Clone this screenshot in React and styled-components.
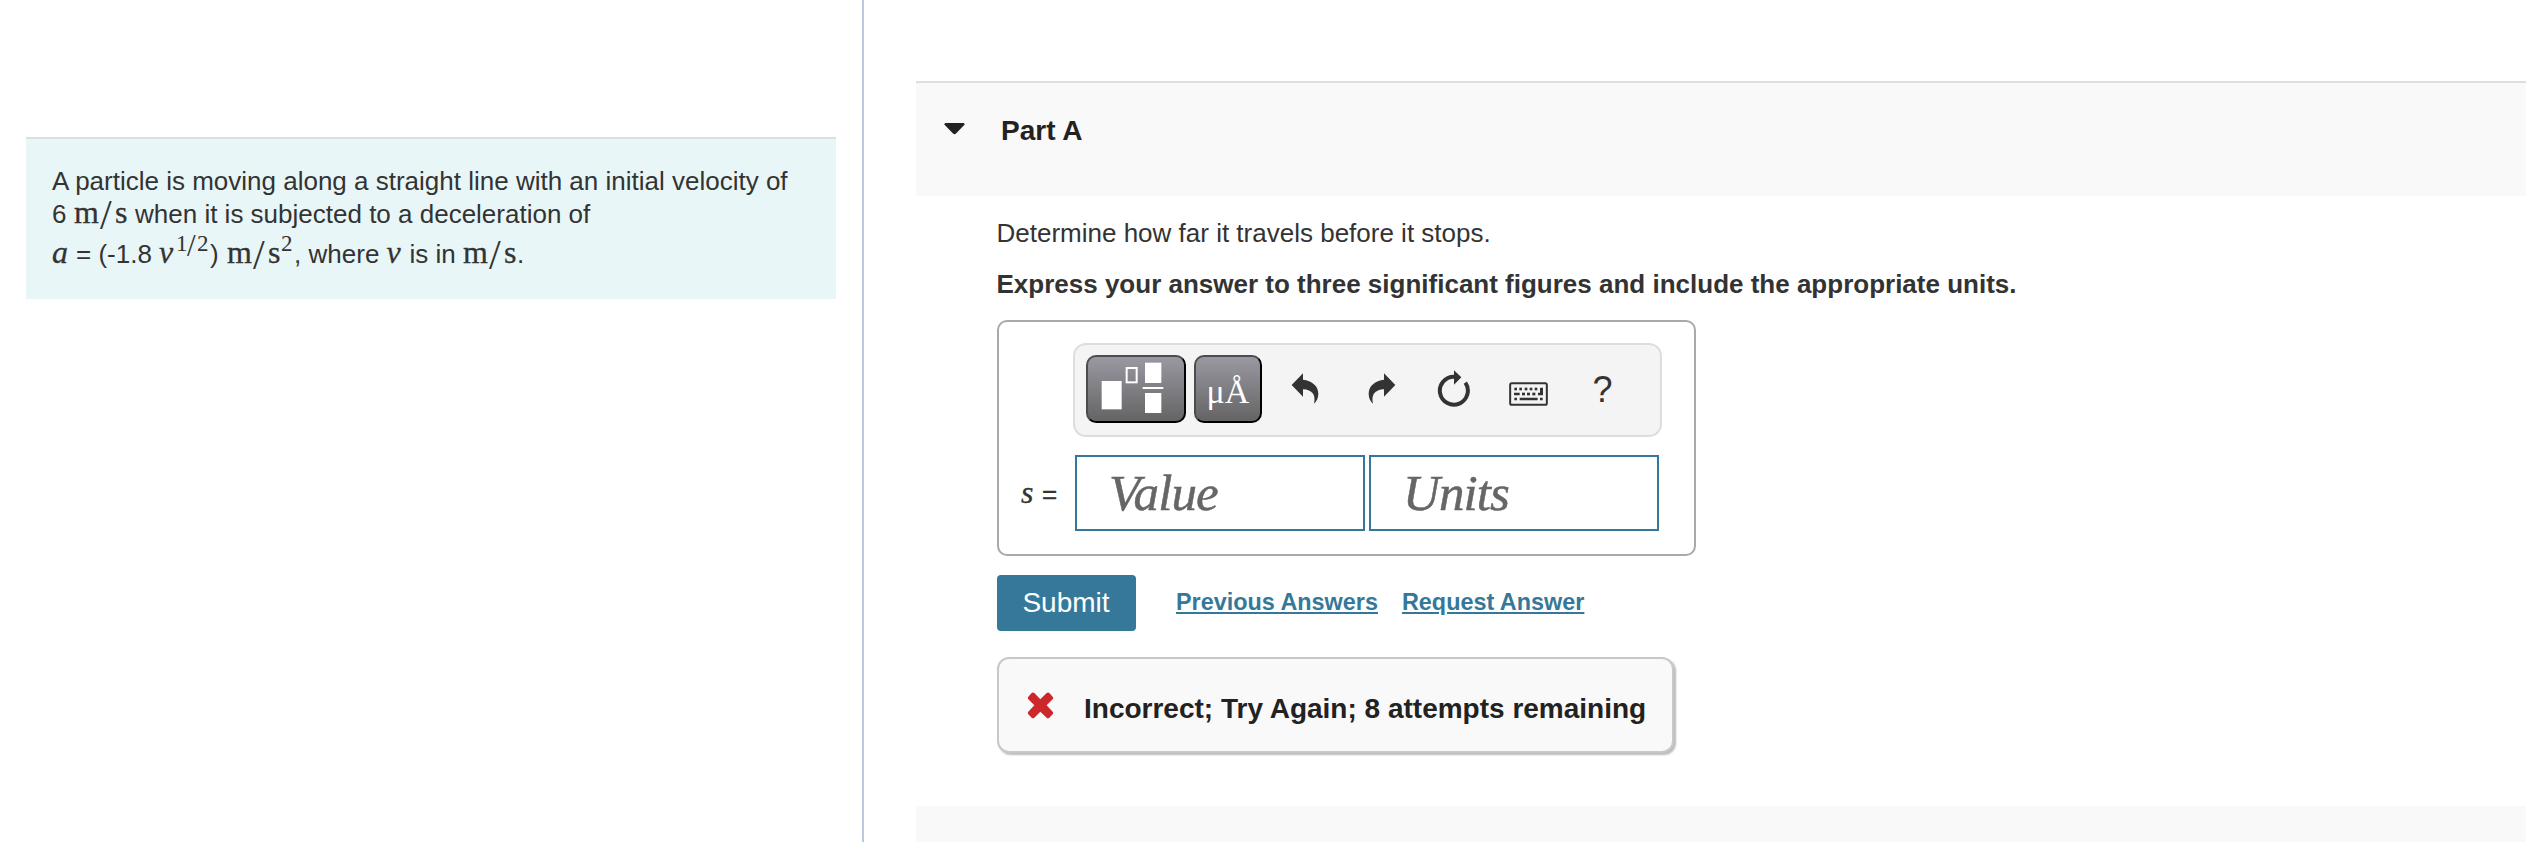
import React from "react";
import styled, { createGlobalStyle } from "styled-components";

const Global = createGlobalStyle`
  * { box-sizing: border-box; }
  body {
    margin: 0;
    background: #fff;
    color: #333;
    font-family: "Liberation Sans", Arial, sans-serif;
    font-size: 26px;
    overflow: hidden;
  }
`;

const Page = styled.div`
  display: flex;
  height: 842px;
  overflow: hidden;
`;

const Sidebar = styled.aside`
  flex: none;
  width: 864px;
  padding: 137px 26px 0;
  border-right: 2px solid #bccadb;
`;

const Problem = styled.section`
  height: 162px;
  padding: 26px 0 0 26px;
  background: #e9f6f7;
  border-top: 2px solid #dedede;
`;

const Line = styled.div`
  display: flex;
  align-items: baseline;
  height: ${(p) => p.$h}px;
  line-height: ${(p) => p.$h}px;
  white-space: pre;
`;

const Piece = styled.span`
  flex: none;
  width: ${(p) => (p.$w ? p.$w + "px" : "auto")};
`;

const MathPiece = styled(Piece)`
  font-family: "Liberation Serif", serif;
  font-size: ${(p) => p.$size || 32}px;
  font-style: ${(p) => (p.$italic ? "italic" : "normal")};
  line-height: 0;
  -webkit-text-stroke: 0.3px currentColor;
`;

const Slash = styled(MathPiece)`
  position: relative;
  top: 6px;
  -webkit-text-stroke: 0;
`;

const Superscript = styled(MathPiece)`
  position: relative;
  top: ${(p) => p.$top || -12}px;
  -webkit-text-stroke: 0;
`;

const Main = styled.main`
  flex: 1;
  display: flex;
  flex-direction: column;
  padding: 81px 0 0 52px;
`;

const PartHeader = styled.header`
  flex: none;
  display: flex;
  height: 115px;
  padding: 30px 0 0 28px;
  background: #f9f9f9;
  border-top: 2px solid #dedede;
`;

const Caret = styled.svg`
  flex: none;
  margin: 10px 36px 0 0;
`;

const PartTitle = styled.h2`
  margin: 0;
  font-size: 28px;
  line-height: 36px;
  color: #222;
`;

const PartBody = styled.div`
  display: flex;
  flex-direction: column;
  align-items: flex-start;
  padding: 21px 0 0 81px;
`;

const Prompt = styled.p`
  margin: 0 0 19px -0.5px;
  height: 32px;
  line-height: 32px;
  font-weight: ${(p) => (p.$bold ? 700 : 400)};
  white-space: nowrap;
`;

const AnswerBox = styled.div`
  width: 699px;
  height: 236px;
  margin-top: 1px;
  padding: 21px 0 0 22px;
  border: 2px solid #a9a9a9;
  border-radius: 10px;
`;

const Toolbar = styled.div`
  display: flex;
  width: 589px;
  height: 94px;
  margin-left: 52px;
  padding: 10px 0 0 11px;
  background: #f4f4f4;
  border: 2px solid #ddd;
  border-radius: 13px;
`;

const PaletteButton = styled.button`
  flex: none;
  display: flex;
  align-items: center;
  justify-content: center;
  width: ${(p) => p.$w}px;
  height: 68px;
  margin: 0 8px 0 0;
  padding: ${(p) => p.$pad};
  border: 2px solid;
  border-color: #4c4c4c #000 #000 #4c4c4c;
  border-radius: 10px;
  background: linear-gradient(#9a98a2, #646464);
  color: #fff;
  font-family: "Liberation Serif", serif;
  font-size: 34px;
`;

const IconButton = styled.button`
  flex: none;
  display: flex;
  align-items: center;
  justify-content: center;
  width: ${(p) => p.$w}px;
  height: 68px;
  padding: ${(p) => p.$drop || 0}px 0 0;
  border: 0;
  background: none;
  color: #333;
  font-family: "Liberation Sans", sans-serif;
  font-size: 36px;
`;

const FieldRow = styled.div`
  display: flex;
  margin-top: 18px;
`;

const FieldLabel = styled.div`
  display: flex;
  align-items: baseline;
  width: 54px;
  height: 76px;
  line-height: 78px;
`;

const Equals = styled(Piece)`
  -webkit-text-stroke: 0.4px currentColor;
`;

const Field = styled.div`
  width: 290px;
  height: 76px;
  margin-right: 4px;
  padding-left: 32px;
  border: 2px solid #367899;
  color: #666;
  font-family: "Liberation Serif", serif;
  font-style: italic;
  font-size: 51px;
  line-height: 72px;
  letter-spacing: -0.9px;
  -webkit-text-stroke: 0.5px currentColor;
`;

const Actions = styled.div`
  display: flex;
  height: 56px;
  margin-top: 19px;
`;

const Submit = styled.button`
  width: 139px;
  height: 56px;
  margin: 0 40px 0 0;
  padding: 0 1px 0 0;
  border: 0;
  border-radius: 4px;
  background: #367899;
  color: #fff;
  font-family: "Liberation Sans", sans-serif;
  font-size: 28px;
  line-height: 56px;
`;

const TextLink = styled.a`
  margin-right: 24px;
  color: #367899;
  font-size: 23.4px;
  font-weight: 700;
  line-height: 55px;
  text-decoration: underline;
  text-decoration-thickness: 2px;
  text-underline-offset: 2px;
  white-space: nowrap;
`;

const Feedback = styled.div`
  display: flex;
  align-items: center;
  width: 677px;
  height: 96px;
  margin-top: 26px;
  padding-left: 28px;
  border: 2px solid #c8c8c8;
  border-radius: 12px;
  background: #f9f9f9;
  box-shadow: 2px 2px 2px #bbb;
  color: #222;
  font-size: 28px;
  font-weight: 700;
  white-space: nowrap;
`;

const FeedbackText = styled.span`
  margin: 7px 0 0 30px;
`;

const NextPart = styled.div`
  flex: none;
  height: 36px;
  margin-top: 53px;
  background: #f9f9f9;
`;

const TemplateIcon = () => (
  <svg width="64" height="52" viewBox="364 156 192 156">
    <g fill="#fff">
      <rect x="366" y="213" width="60" height="85" />
      <rect x="496" y="158" width="49" height="61" />
      <rect x="489" y="231" width="62" height="6" />
      <rect x="496" y="249" width="49" height="60" />
    </g>
    <rect x="441" y="174" width="30" height="43" fill="none" stroke="#fff" strokeWidth="6" />
  </svg>
);

const BentArrow = ({ flip }) => (
  <svg width="28" height="32" viewBox="0 0 84 96">
    <path
      transform={flip ? "translate(84 0) scale(-1 1)" : undefined}
      fill="#333"
      d="M2 36 36 1V20C62 23 82 38 82 62 82 74 77 85 69 92 75 66 64 50 36 49V71Z"
    />
  </svg>
);

const ResetIcon = () => (
  <svg width="34" height="38" viewBox="291 181 102 114">
    <path d="M342 201A42 42 0 1 0 376 219" fill="none" stroke="#333" strokeWidth="12" />
    <path d="M342 182 364 203 342 225Z" fill="#333" />
  </svg>
);

const KeyboardIcon = () => (
  <svg width="39" height="24" viewBox="505 216 117 72">
    <rect x="508.5" y="219.5" width="110" height="65" rx="5" fill="none" stroke="#333" strokeWidth="6" />
    <g fill="#333">
      {[521, 536, 552, 567, 582].map((x) => (
        <rect key={x} x={x} y="233" width="8" height="8" />
      ))}
      <path d="M598 233h9v23h-15v-8h6zM520 248h17v8h-17zM521 263h8v8h-8zM537 263h54v8h-54zM598 263h8v8h-8z" />
      {[544, 559, 575].map((x) => (
        <rect key={x} x={x} y="248" width="9" height="8" />
      ))}
    </g>
  </svg>
);

const CrossIcon = () => (
  <svg width="27" height="27" viewBox="0 0 81 81">
    <path
      fill="#cc282c"
      d="M4 14 14 3Q18 0 22 3L40 22 59 3Q63 0 67 3L77 14Q81 18 77 22L59 40 77 59Q81 63 77 67L67 77Q63 81 59 77L40 59 22 77Q18 81 14 77L4 67Q0 63 4 59L22 40 4 22Q0 18 4 14Z"
    />
  </svg>
);

const MetresPerSecond = ({ after = 13 }) => (
  <>
    <MathPiece $w={26}>m</MathPiece>
    <Slash $w={15} $size={42}>/</Slash>
    <MathPiece $w={after}>s</MathPiece>
  </>
);

export default function App() {
  return (
    <>
      <Global />
      <Page>
        <Sidebar>
          <Problem>
            <Line $h={33}>
              <Piece>A particle is moving along a straight line with an initial velocity of</Piece>
            </Line>
            <Line $h={33}>
              <Piece $w={22}>6</Piece>
              <MetresPerSecond after={20} />
              <Piece>when it is subjected to a deceleration of</Piece>
            </Line>
            <Line $h={47}>
              <MathPiece $w={24} $italic>a</MathPiece>
              <Piece>= (-1.8 </Piece>
              <MathPiece $w={17} $italic>v</MathPiece>
              <Superscript $w={11} $size={23}>1</Superscript>
              <Superscript $w={10} $size={31} $top={-7}>/</Superscript>
              <Superscript $w={13} $size={23}>2</Superscript>
              <Piece $w={17}>)</Piece>
              <MetresPerSecond />
              <Superscript $w={13} $size={23}>2</Superscript>
              <Piece>, where </Piece>
              <MathPiece $w={23} $italic>v</MathPiece>
              <Piece>is in </Piece>
              <MetresPerSecond />
              <Piece>.</Piece>
            </Line>
          </Problem>
        </Sidebar>
        <Main>
          <PartHeader>
            <Caret width="21" height="12" viewBox="0 0 21 12">
              <path d="M1.5 0H19.5Q21.5 .8 20 2.3L12 10.6Q10.5 12 9 10.6L1 2.3Q-.5 .8 1.5 0Z" fill="#222" />
            </Caret>
            <PartTitle>Part A</PartTitle>
          </PartHeader>
          <PartBody>
            <Prompt>Determine how far it travels before it stops.</Prompt>
            <Prompt $bold>Express your answer to three significant figures and include the appropriate units.</Prompt>
            <AnswerBox>
              <Toolbar>
                <PaletteButton $w={100} $pad="0 6px 2px 0" aria-label="Templates"><TemplateIcon /></PaletteButton>
                <PaletteButton $w={68} $pad="6px 0 0">μÅ</PaletteButton>
                <IconButton $w={70} aria-label="Undo"><BentArrow /></IconButton>
                <IconButton $w={83} aria-label="Redo"><BentArrow flip /></IconButton>
                <IconButton $w={62} aria-label="Reset"><ResetIcon /></IconButton>
                <IconButton $w={86} $drop={10} aria-label="Keyboard"><KeyboardIcon /></IconButton>
                <IconButton $w={63} $drop={2}>?</IconButton>
              </Toolbar>
              <FieldRow>
                <FieldLabel>
                  <MathPiece $w={21} $italic>s</MathPiece>
                  <Equals>=</Equals>
                </FieldLabel>
                <Field>Value</Field>
                <Field>Units</Field>
              </FieldRow>
            </AnswerBox>
            <Actions>
              <Submit>Submit</Submit>
              <TextLink>Previous Answers</TextLink>
              <TextLink>Request Answer</TextLink>
            </Actions>
            <Feedback>
              <CrossIcon />
              <FeedbackText>Incorrect; Try Again; 8 attempts remaining</FeedbackText>
            </Feedback>
          </PartBody>
          <NextPart />
        </Main>
      </Page>
    </>
  );
}
